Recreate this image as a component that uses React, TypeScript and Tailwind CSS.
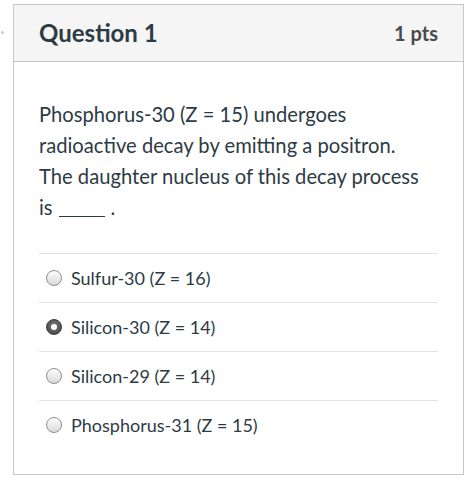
import React from "react";

const options = [
  { label: "Sulfur-30 (Z = 16)", checked: false },
  { label: "Silicon-30 (Z = 14)", checked: true },
  { label: "Silicon-29 (Z = 14)", checked: false },
  { label: "Phosphorus-31 (Z = 15)", checked: false },
];

const Radio = ({ checked }: { checked: boolean }) =>
  checked ? (
    <span className="flex h-[16px] w-[16px] shrink-0 items-center justify-center rounded-full border border-[#3a3a3a] bg-[radial-gradient(circle_at_50%_40%,#7a7a7a,#3c3c3c)]">
      <span className="h-[6px] w-[6px] rounded-full bg-white" />
    </span>
  ) : (
    <span className="h-[16px] w-[16px] shrink-0 rounded-full border border-[#8e8e8e] bg-[linear-gradient(#fdfdfd,#d9d9d9)]" />
  );

export default function App() {
  return (
    <div className="flex h-[481px] w-[474px] bg-white font-['Lato','Noto_Sans',sans-serif] text-[#2d3b45]">
      <div className="mt-[31px] ml-[1px] h-[3px] w-[3px] rounded-full bg-[#c8c8c8]" />
      <div className="mt-[4px] ml-[9px] flex h-[471px] w-[451px] flex-col border border-[#c4c8cb]">
        <div className="flex h-[57px] items-center justify-between border-b border-[#c4c8cb] bg-[#f5f5f5] px-[25px]">
          <span className="text-[24px] font-bold">Question 1</span>
          <span className="text-[20px] font-bold text-[#4a4a4a]">1 pts</span>
        </div>
        <div className="px-[25px]">
          <p className="pt-[37px] pb-[30px] text-[20.2px] leading-[31px]">
            Phosphorus-30 (Z = 15) undergoes radioactive decay by emitting a positron.
            <br />
            The daughter nucleus of this decay process
            <br />
            is
            <span className="ml-[6px] mr-[6px] inline-block h-[20px] w-[46px] translate-y-[2px] border-b border-[#2d3b45]" />
            .
          </p>
          <div>
            {options.map((o) => (
              <div
                key={o.label}
                className="flex h-[49px] items-center gap-[9px] border-t border-[#e2e2e2] pl-[7px]"
              >
                <Radio checked={o.checked} />
                <span className="text-[18px]">{o.label}</span>
              </div>
            ))}
          </div>
        </div>
      </div>
    </div>
  );
}
